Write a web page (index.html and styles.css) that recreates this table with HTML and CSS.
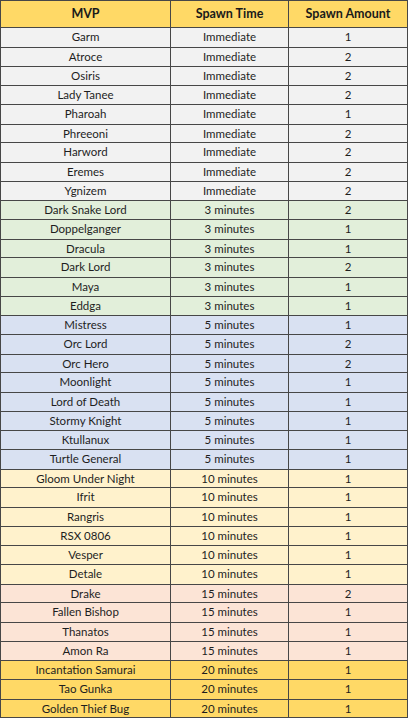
FILE: index.html
```html
<!DOCTYPE html>
<html>
<head>
<meta charset="utf-8">
<link rel="stylesheet" href="styles.css">
</head>
<body>
<table class="mvp-table">
  <colgroup>
    <col class="c-name">
    <col class="c-time">
    <col class="c-amount">
  </colgroup>
  <thead>
    <tr><th>MVP</th><th>Spawn Time</th><th>Spawn Amount</th></tr>
  </thead>
  <tbody>
    <tr class="g-gray"><td>Garm</td><td>Immediate</td><td>1</td></tr>
    <tr class="g-gray"><td>Atroce</td><td>Immediate</td><td>2</td></tr>
    <tr class="g-gray"><td>Osiris</td><td>Immediate</td><td>2</td></tr>
    <tr class="g-gray"><td>Lady Tanee</td><td>Immediate</td><td>2</td></tr>
    <tr class="g-gray"><td>Pharoah</td><td>Immediate</td><td>1</td></tr>
    <tr class="g-gray"><td>Phreeoni</td><td>Immediate</td><td>2</td></tr>
    <tr class="g-gray"><td>Harword</td><td>Immediate</td><td>2</td></tr>
    <tr class="g-gray"><td>Eremes</td><td>Immediate</td><td>2</td></tr>
    <tr class="g-gray"><td>Ygnizem</td><td>Immediate</td><td>2</td></tr>
    <tr class="g-green"><td>Dark Snake Lord</td><td>3 minutes</td><td>2</td></tr>
    <tr class="g-green"><td>Doppelganger</td><td>3 minutes</td><td>1</td></tr>
    <tr class="g-green"><td>Dracula</td><td>3 minutes</td><td>1</td></tr>
    <tr class="g-green"><td>Dark Lord</td><td>3 minutes</td><td>2</td></tr>
    <tr class="g-green"><td>Maya</td><td>3 minutes</td><td>1</td></tr>
    <tr class="g-green"><td>Eddga</td><td>3 minutes</td><td>1</td></tr>
    <tr class="g-blue"><td>Mistress</td><td>5 minutes</td><td>1</td></tr>
    <tr class="g-blue"><td>Orc Lord</td><td>5 minutes</td><td>2</td></tr>
    <tr class="g-blue"><td>Orc Hero</td><td>5 minutes</td><td>2</td></tr>
    <tr class="g-blue"><td>Moonlight</td><td>5 minutes</td><td>1</td></tr>
    <tr class="g-blue"><td>Lord of Death</td><td>5 minutes</td><td>1</td></tr>
    <tr class="g-blue"><td>Stormy Knight</td><td>5 minutes</td><td>1</td></tr>
    <tr class="g-blue"><td>Ktullanux</td><td>5 minutes</td><td>1</td></tr>
    <tr class="g-blue"><td>Turtle General</td><td>5 minutes</td><td>1</td></tr>
    <tr class="g-cream"><td>Gloom Under Night</td><td>10 minutes</td><td>1</td></tr>
    <tr class="g-cream"><td>Ifrit</td><td>10 minutes</td><td>1</td></tr>
    <tr class="g-cream"><td>Rangris</td><td>10 minutes</td><td>1</td></tr>
    <tr class="g-cream"><td>RSX 0806</td><td>10 minutes</td><td>1</td></tr>
    <tr class="g-cream"><td>Vesper</td><td>10 minutes</td><td>1</td></tr>
    <tr class="g-cream"><td>Detale</td><td>10 minutes</td><td>1</td></tr>
    <tr class="g-pink"><td>Drake</td><td>15 minutes</td><td>2</td></tr>
    <tr class="g-pink"><td>Fallen Bishop</td><td>15 minutes</td><td>1</td></tr>
    <tr class="g-pink"><td>Thanatos</td><td>15 minutes</td><td>1</td></tr>
    <tr class="g-pink"><td>Amon Ra</td><td>15 minutes</td><td>1</td></tr>
    <tr class="g-gold"><td>Incantation Samurai</td><td>20 minutes</td><td>1</td></tr>
    <tr class="g-gold"><td>Tao Gunka</td><td>20 minutes</td><td>1</td></tr>
    <tr class="g-gold"><td>Golden Thief Bug</td><td>20 minutes</td><td>1</td></tr>
  </tbody>
</table>
</body>
</html>
```

FILE: styles.css
```css
html, body {
  margin: 0;
  padding: 0;
  background: #ffffff;
}

.mvp-table {
  border-collapse: collapse;
  table-layout: fixed;
  width: 407px;
  font-family: Lato, "Open Sans", "Liberation Sans", sans-serif;
  font-size: 11.5px;
  color: #1e1e1e;
}

.c-name { width: 170px; }
.c-time { width: 118px; }
.c-amount { width: 119px; }

.mvp-table th,
.mvp-table td {
  box-sizing: border-box;
  border: 1px solid #474747;
  text-align: center;
  vertical-align: middle;
  padding: 0;
  line-height: 1;
  white-space: nowrap;
}

.mvp-table th {
  height: 27px;
  background: #ffd966;
  font-size: 12.5px;
  font-weight: 700;
  color: #1a1a1a;
}

.mvp-table td {
  height: 19px;
  padding: 3px 0 4px;
}

.mvp-table tbody tr:nth-child(3n) td {
  height: 18px;
  padding: 3px 0 3px;
}

.g-gray { background: #f2f2f2; }
.g-green { background: #e2efda; }
.g-blue { background: #d9e1f2; }
.g-cream { background: #fff2cc; }
.g-pink { background: #fce4d6; }
.g-gold { background: #ffd966; }
```
